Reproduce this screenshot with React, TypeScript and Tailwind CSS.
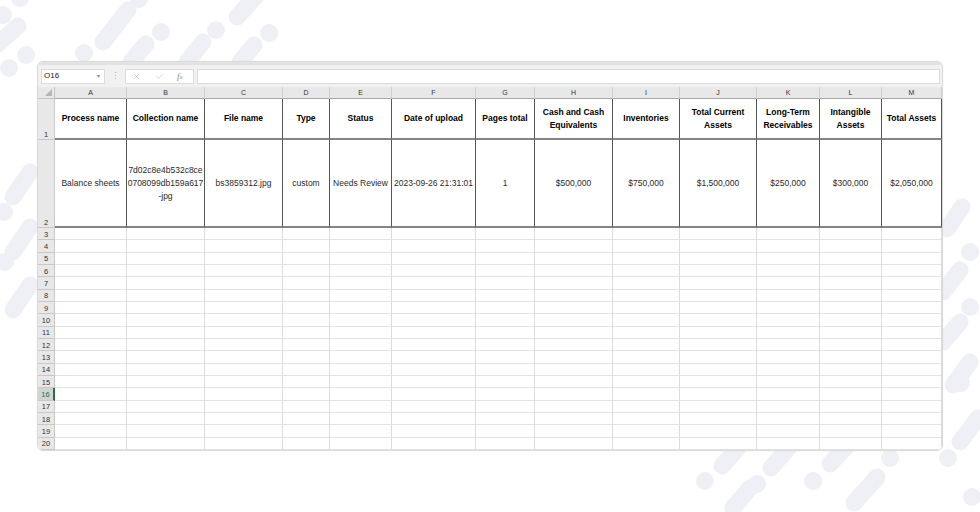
import React from 'react';
import { X, Check } from 'lucide-react';

const cols = ['A', 'B', 'C', 'D', 'E', 'F', 'G', 'H', 'I', 'J', 'K', 'L', 'M'];
const grid =
  'grid grid-cols-[17px_72px_78px_78px_47px_62px_84px_59px_78px_67px_77px_63px_62px_60px]';

const headers: string[][] = [
  ['Process name'],
  ['Collection name'],
  ['File name'],
  ['Type'],
  ['Status'],
  ['Date of upload'],
  ['Pages total'],
  ['Cash and Cash', 'Equivalents'],
  ['Inventories'],
  ['Total Current', 'Assets'],
  ['Long-Term', 'Receivables'],
  ['Intangible', 'Assets'],
  ['Total Assets'],
];

const values: string[][] = [
  ['Balance sheets'],
  ['7d02c8e4b532c8ce', '0708099db159a617', '-jpg'],
  ['bs3859312.jpg'],
  ['custom'],
  ['Needs Review'],
  ['2023-09-26 21:31:01'],
  ['1'],
  ['$500,000'],
  ['$750,000'],
  ['$1,500,000'],
  ['$250,000'],
  ['$300,000'],
  ['$2,050,000'],
];

// decoration behind the sheet
const pills: [number, number, number, number][] = [
  [103, 42, 128, 10],
  [237, 17, 256, -4],
  [131, 62, 146, 44],
  [187, 62, 203, 42],
  [240, 62, 254, 45],
  [-2, 44, 18, 26],
  [13, 197, 30, 172],
  [13, 252, 30, 227],
  [13, 310, 30, 285],
  [947, 229, 962, 207],
  [943, 292, 960, 270],
  [943, 342, 960, 322],
  [953, 385, 970, 362],
  [960, 442, 978, 418],
  [722, 466, 745, 440],
  [771, 468, 795, 440],
  [830, 464, 852, 440],
  [854, 503, 877, 477],
  [733, 508, 750, 488],
];

const dots: [number, number][] = [
  [20, -2],
  [3, 15],
  [139, -1],
  [161, 32],
  [216, 30],
  [269, 33],
  [26, 55],
  [84, 53],
  [9, 68],
  [4, 212],
  [5, 262],
  [970, 252],
  [970, 307],
  [961, 383],
  [948, 458],
  [972, 497],
  [705, 481],
  [757, 484],
  [813, 481],
  [890, 458],
];

function Backdrop() {
  return (
    <svg className="absolute inset-0" width="980" height="512" viewBox="0 0 980 512">
      <g stroke="#eef0f6" strokeWidth="17" strokeLinecap="round">
        {pills.map(([x1, y1, x2, y2], i) => (
          <line key={i} x1={x1} y1={y1} x2={x2} y2={y2} />
        ))}
      </g>
      <g fill="#eef0f6">
        {dots.map(([cx, cy], i) => (
          <circle key={i} cx={cx} cy={cy} r="9" />
        ))}
      </g>
    </svg>
  );
}

function FormulaBar() {
  return (
    <div className="flex h-[25px] items-center border-t-[3px] border-[#e3e3e3] bg-[#f1f1f1]">
      <div className="ml-[3px] flex h-[15px] w-[64px] items-center justify-between border border-[#dcdcdc] bg-white pl-[2px] pr-[4px]">
        <span className="text-[8px] leading-none text-[#222]">O16</span>
        <span className="text-[6px] leading-none text-[#888]">▾</span>
      </div>
      <div className="flex w-[20px] justify-center text-[9px] leading-none text-[#b5b5b5]">⋮</div>
      <div className="flex h-[15px] w-[69px] items-center border border-[#dcdcdc] bg-white">
        <X className="ml-[6px] h-[9px] w-[9px] text-[#b0b0b0]" strokeWidth={1.5} />
        <Check className="ml-[14px] h-[9px] w-[9px] text-[#b0b0b0]" strokeWidth={1.5} />
        <span className="ml-[13px] font-['Liberation_Serif',serif] text-[9px] italic leading-none text-[#8a8a8a]">
          f<span className="text-[7px]">x</span>
        </span>
      </div>
      <div className="ml-[3px] mr-[2px] h-[15px] flex-1 border border-[#dcdcdc] bg-white" />
    </div>
  );
}

function ColumnHeaders() {
  return (
    <div className={`${grid} h-[12px] bg-[#e8e8e8]`}>
      <div className="relative border-r border-b border-[#c4c4c4]">
        <div className="absolute bottom-[2px] right-[2px] h-0 w-0 border-b-[7px] border-l-[7px] border-b-[#b5b5b5] border-l-transparent" />
      </div>
      {cols.map((c) => (
        <div
          key={c}
          className="flex items-center justify-center border-r border-b border-r-[#d0d0d0] border-b-[#a9a9a9] text-[7px] leading-none text-[#333]"
        >
          {c}
        </div>
      ))}
    </div>
  );
}

function RowHead({ n, active }: { n: number; active?: boolean }) {
  return (
    <div
      className={`flex items-end justify-center pb-[1px] text-[7.5px] leading-none ${
        active
          ? 'border-r-2 border-b border-r-[#217346] border-b-[#c8c8c8] bg-[#d3d3d3] text-[#217346]'
          : 'border-r border-b border-[#c8c8c8] bg-[#e8e8e8] text-[#333]'
      }`}
    >
      {n}
    </div>
  );
}

function DataRow({ n, cells, bold, h }: { n: number; cells: string[][]; bold?: boolean; h: string }) {
  return (
    <div className={`${grid} ${h} bg-white`}>
      <RowHead n={n} />
      {cells.map((lines, i) => (
        <div
          key={i}
          className={`flex flex-col items-center justify-center border-r border-b-2 border-r-[#555] border-b-[#858585] text-center text-[8.5px] leading-[13px] ${
            bold ? 'font-bold text-black' : 'text-[#2a2a2a]'
          }`}
        >
          {lines.map((l) => (
            <span key={l} className="whitespace-nowrap">
              {l}
            </span>
          ))}
        </div>
      ))}
    </div>
  );
}

function EmptyRow({ n }: { n: number }) {
  return (
    <div className={`${grid} h-[12.33px] bg-white`}>
      <RowHead n={n} active={n === 16} />
      {cols.map((c) => (
        <div key={c} className="border-r border-b border-r-[#dcdcdc] border-b-[#e2e2e2]" />
      ))}
    </div>
  );
}

export default function App() {
  const empty = Array.from({ length: 18 }, (_, i) => i + 3);
  return (
    <div className="relative h-[512px] w-[980px] overflow-hidden bg-white font-['Liberation_Sans',Arial,sans-serif]">
      <Backdrop />
      <div className="relative pl-[37px] pt-[61px]">
        <div className="w-[906px] overflow-hidden rounded-[6px] border border-[#dadada] bg-[#f1f1f1] shadow-[0_0_2px_rgba(0,0,0,0.06)]">
          <FormulaBar />
          <ColumnHeaders />
          <DataRow n={1} cells={headers} bold h="h-[41px]" />
          <DataRow n={2} cells={values} h="h-[88px]" />
          {empty.map((n) => (
            <EmptyRow key={n} n={n} />
          ))}
        </div>
      </div>
    </div>
  );
}
